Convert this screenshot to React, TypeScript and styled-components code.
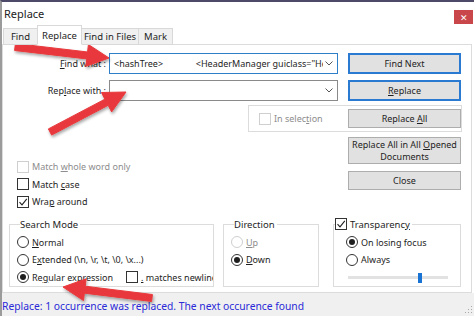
import React from 'react'
import styled, { createGlobalStyle } from 'styled-components'

const GlobalStyle = createGlobalStyle`
  html, body {
    margin: 0;
    padding: 0;
    width: 474px;
    height: 316px;
    overflow: hidden;
    background: #ffffff;
  }
  * { box-sizing: border-box; }
`

const uiFont = `"Noto Sans", "Open Sans", sans-serif`

const Window = styled.div`
  position: relative;
  width: 474px;
  height: 316px;
  background: #ffffff;
  border-top: 2px solid #4d4968;
  border-left: 2px solid #9b9b9b;
  display: flex;
  flex-direction: column;
  font-family: ${uiFont};
  font-size: 9px;
  color: #1e1e1e;
`

const TitleBar = styled.div`
  height: 22px;
  display: flex;
  align-items: center;
  justify-content: space-between;
  padding: 0 1px 0 2px;

  span {
    font-size: 11px;
    color: #222;
  }
`

const CloseBox = styled.div`
  width: 19px;
  height: 14px;
  margin-top: 8px;
  background: #c9474b;
  color: #fff;
  font-size: 9px;
  display: flex;
  align-items: center;
  justify-content: center;
`

const TabStrip = styled.div`
  display: flex;
  align-items: flex-end;
  height: 20px;
  padding-left: 2px;
`

const Tab = styled.div<{ $w: number; $active?: boolean }>`
  width: ${p => p.$w}px;
  height: ${p => (p.$active ? 20 : 17)}px;
  display: flex;
  align-items: center;
  justify-content: center;
  background: ${p => (p.$active ? '#ffffff' : '#f0f0f0')};
  border: 1px solid #d9d9d9;
  border-bottom: ${p => (p.$active ? '1px solid #ffffff' : '1px solid #d9d9d9')};
  margin-bottom: -1px;
  margin-left: -1px;
  font-size: 9.5px;
  white-space: nowrap;
  position: relative;
  z-index: ${p => (p.$active ? 2 : 1)};
`

const Panel = styled.div`
  height: 249px;
  width: 470px;
  border: 1px solid #dcdcdc;
  background: #ffffff;
  display: flex;
  flex-direction: column;
  padding: 8px 0 0 0;
`

const FieldRow = styled.div<{ $top?: number }>`
  display: flex;
  align-items: center;
  height: 21px;
  margin-top: ${p => p.$top ?? 0}px;
`

const Label = styled.div`
  width: 106px;
  text-align: right;
  padding-right: 3px;
  white-space: nowrap;
`

const Combo = styled.div<{ $focus?: boolean }>`
  width: 229px;
  height: 21px;
  border: 1px solid ${p => (p.$focus ? '#2f7fc8' : '#8a8a8a')};
  display: flex;
  align-items: center;
  padding-left: 4px;
  margin-right: 10px;
  overflow: hidden;

  .text {
    flex: 1;
    white-space: pre;
    overflow: hidden;
  }
  svg { flex: none; margin: 0 4px 0 2px; }
`

const Button = styled.div<{ $h?: number; $default?: boolean }>`
  width: 113px;
  height: ${p => p.$h ?? 20}px;
  background: #e1e1e1;
  border: 1px solid ${p => (p.$default ? '#2a7ad2' : '#adadad')};
  box-shadow: ${p => (p.$default ? 'inset 0 0 0 1px #2a7ad2' : 'none')};
  display: flex;
  align-items: center;
  justify-content: center;
  text-align: center;
  line-height: 12px;
  flex: none;
`

const U = styled.span`
  text-decoration: underline;
  text-underline-offset: 1px;
`

const SelectionBox = styled.div`
  margin: 4px 0 0 245px;
  width: 214px;
  height: 27px;
  border: 1px solid #dcdcdc;
  display: flex;
  align-items: center;
  justify-content: space-between;
  padding-left: 10px;
`

const CheckLine = styled.div<{ $disabled?: boolean; $h?: number; $indent?: number }>`
  display: flex;
  align-items: center;
  gap: 3px;
  height: ${p => p.$h ?? 17.5}px;
  padding-left: ${p => p.$indent ?? 0}px;
  color: ${p => (p.$disabled ? '#8d8d8d' : '#1e1e1e')};
  white-space: nowrap;
`

const Box = styled.div<{ $disabled?: boolean; $gapLeft?: number }>`
  width: 12px;
  height: 12px;
  margin-left: ${p => p.$gapLeft ?? 0}px;
  border: 1px solid ${p => (p.$disabled ? '#cfcfcf' : '#333333')};
  background: #fff;
  display: flex;
  align-items: center;
  justify-content: center;
  flex: none;
`

const Radio = styled.div<{ $checked?: boolean; $disabled?: boolean }>`
  width: 12px;
  height: 12px;
  border-radius: 50%;
  border: 1px solid ${p => (p.$disabled ? '#cfcfcf' : '#333333')};
  background: #fff;
  display: flex;
  align-items: center;
  justify-content: center;
  flex: none;

  &::after {
    content: '';
    display: ${p => (p.$checked ? 'block' : 'none')};
    width: 6px;
    height: 6px;
    border-radius: 50%;
    background: #1e1e1e;
  }
`

const MiddleRow = styled.div`
  display: flex;
  margin-top: 5px;
`

const Options = styled.div`
  width: 345px;
  padding: 21px 0 0 14px;
  display: flex;
  flex-direction: column;
`

const ButtonColumn = styled.div`
  display: flex;
  flex-direction: column;
  gap: 7px;
`

const GroupRow = styled.div`
  display: flex;
  margin-top: 7px;
  padding-left: 6px;
`

const Group = styled.fieldset<{ $w: number; $ml?: number }>`
  width: ${p => p.$w}px;
  height: 69px;
  margin: 0 0 0 ${p => p.$ml ?? 0}px;
  padding: 3px 0 0 7px;
  border: 1px solid #dcdcdc;
  min-width: 0;
  overflow: hidden;

  legend {
    padding: 0 2px 0 0;
    margin-left: 3px;
    display: flex;
    align-items: center;
    gap: 3px;
    font-size: 9.5px;
  }
  legend.boxed { margin-left: -6px; }
`

const Slider = styled.div`
  position: relative;
  width: 100px;
  height: 12px;
  margin: 3px 0 0 7px;
  display: flex;
  align-items: center;

  &::before {
    content: '';
    width: 100%;
    height: 3px;
    background: #e2e2e2;
  }
`

const Thumb = styled.div`
  position: absolute;
  left: 70px;
  top: 1px;
  width: 4px;
  height: 10px;
  background: #1873d3;
`

const StatusBar = styled.div`
  flex: 1;
  background: #f0f0f0;
  display: flex;
  align-items: center;
  padding-top: 2px;
  font-size: 10.3px;
  color: #2a2ad8;
  position: relative;
`

const Grip = styled.div`
  position: absolute;
  right: 2px;
  bottom: 3px;
  width: 8px;
  height: 8px;
  background-image: radial-gradient(circle, #a8a8a8 0.8px, transparent 1px);
  background-size: 3px 3px;
  clip-path: polygon(100% 0, 100% 100%, 0 100%);
`

const Overlay = styled.svg`
  position: absolute;
  left: -2px;
  top: -2px;
  pointer-events: none;
`

const Chevron = () => (
  <svg width="8" height="5" viewBox="0 0 8 5">
    <path d="M0.5 0.5 L4 4 L7.5 0.5" fill="none" stroke="#555" strokeWidth="1" />
  </svg>
)

const Check = () => (
  <svg width="10" height="10" viewBox="0 0 10 10">
    <path d="M1.5 5.2 L4 7.8 L8.8 1.8" fill="none" stroke="#222" strokeWidth="1.1" />
  </svg>
)

type Pt = [number, number]

const arrowPoints = (tail: Pt, tip: Pt, w = 7, hw = 22, hl = 22) => {
  const dx = tip[0] - tail[0]
  const dy = tip[1] - tail[1]
  const len = Math.hypot(dx, dy)
  const ux = dx / len
  const uy = dy / len
  const nx = -uy
  const ny = ux
  const bx = tip[0] - ux * hl
  const by = tip[1] - uy * hl
  const pts: Pt[] = [
    [tail[0] + nx * w / 2, tail[1] + ny * w / 2],
    [bx + nx * w / 2, by + ny * w / 2],
    [bx + nx * hw / 2, by + ny * hw / 2],
    tip,
    [bx - nx * hw / 2, by - ny * hw / 2],
    [bx - nx * w / 2, by - ny * w / 2],
    [tail[0] - nx * w / 2, tail[1] - ny * w / 2]
  ]
  return pts.map(p => p.join(',')).join(' ')
}

const arrows: { tail: Pt; tip: Pt }[] = [
  { tail: [15, 47], tip: [109, 58] },
  { tail: [50, 132], tip: [126, 92] },
  { tail: [152, 298], tip: [63, 287] }
]

export default function App() {
  return (
    <>
      <GlobalStyle />
      <Window>
        <TitleBar>
          <span>Replace</span>
          <CloseBox>✕</CloseBox>
        </TitleBar>
        <TabStrip>
          <Tab $w={35}>Find</Tab>
          <Tab $w={45} $active>Replace</Tab>
          <Tab $w={58}>Find in Files</Tab>
          <Tab $w={35}>Mark</Tab>
        </TabStrip>
        <Panel>
          <FieldRow>
            <Label><U>F</U>ind what :</Label>
            <Combo $focus>
              <span className='text'>{'<hashTree>              <HeaderManager guiclass="HeaderPanel"'}</span>
              <Chevron />
            </Combo>
            <Button $h={21} $default><span>Find Next</span></Button>
          </FieldRow>
          <FieldRow $top={6}>
            <Label>Rep<U>l</U>ace with :</Label>
            <Combo>
              <span className='text'></span>
              <Chevron />
            </Combo>
            <Button $h={21} $default><span><U>R</U>eplace</span></Button>
          </FieldRow>
          <SelectionBox>
            <CheckLine $disabled>
              <Box $disabled />
              <span>In selec<U>t</U>ion</span>
            </CheckLine>
            <Button $h={19}><span>Replace <U>A</U>ll</span></Button>
          </SelectionBox>
          <MiddleRow>
            <Options>
              <CheckLine $disabled>
                <Box $disabled />
                <span>Match <U>w</U>hole word only</span>
              </CheckLine>
              <CheckLine>
                <Box />
                <span>Match <U>c</U>ase</span>
              </CheckLine>
              <CheckLine>
                <Box><Check /></Box>
                <span>Wra<U>p</U> around</span>
              </CheckLine>
            </Options>
            <ButtonColumn>
              <Button $h={27}><span>Replace All in All <U>O</U>pened<br />Documents</span></Button>
              <Button $h={19}><span>Close</span></Button>
            </ButtonColumn>
          </MiddleRow>
          <GroupRow>
            <Group $w={205}>
              <legend>Search Mode</legend>
              <CheckLine>
                <Radio />
                <span><U>N</U>ormal</span>
              </CheckLine>
              <CheckLine>
                <Radio />
                <span>E<U>x</U>tended (\n, \r, \t, \0, \x...)</span>
              </CheckLine>
              <CheckLine>
                <Radio $checked />
                <span>Re<U>g</U>ular expression</span>
                <Box $gapLeft={10} />
                <span><U>.</U> matches newline</span>
              </CheckLine>
            </Group>
            <Group $w={96} $ml={9}>
              <legend>Direction</legend>
              <CheckLine $disabled>
                <Radio $disabled />
                <span><U>U</U>p</span>
              </CheckLine>
              <CheckLine>
                <Radio $checked />
                <span><U>D</U>own</span>
              </CheckLine>
            </Group>
            <Group $w={128} $ml={14}>
              <legend className='boxed'>
                <Box><Check /></Box>
                <span>Transparenc<U>y</U></span>
              </legend>
              <CheckLine $indent={5}>
                <Radio $checked />
                <span>On losing focus</span>
              </CheckLine>
              <CheckLine $indent={5}>
                <Radio />
                <span>Always</span>
              </CheckLine>
              <Slider>
                <Thumb />
              </Slider>
            </Group>
          </GroupRow>
        </Panel>
        <StatusBar>
          <span>Replace: 1 occurrence was replaced. The next occurence found</span>
          <Grip />
        </StatusBar>
        <Overlay width={474} height={316} viewBox='0 0 474 316'>
          <defs>
            <filter id='shade' x='-20%' y='-50%' width='140%' height='200%'>
              <feDropShadow dx='1' dy='2' stdDeviation='1.5' floodColor='#000' floodOpacity='0.35' />
            </filter>
          </defs>
          {arrows.map((a, i) => (
            <polygon
              key={i}
              points={arrowPoints(a.tail, a.tip)}
              fill='#e8393c'
              stroke='#e8393c'
              strokeWidth={1}
              strokeLinejoin='round'
              filter='url(#shade)'
            />
          ))}
        </Overlay>
      </Window>
    </>
  )
}
